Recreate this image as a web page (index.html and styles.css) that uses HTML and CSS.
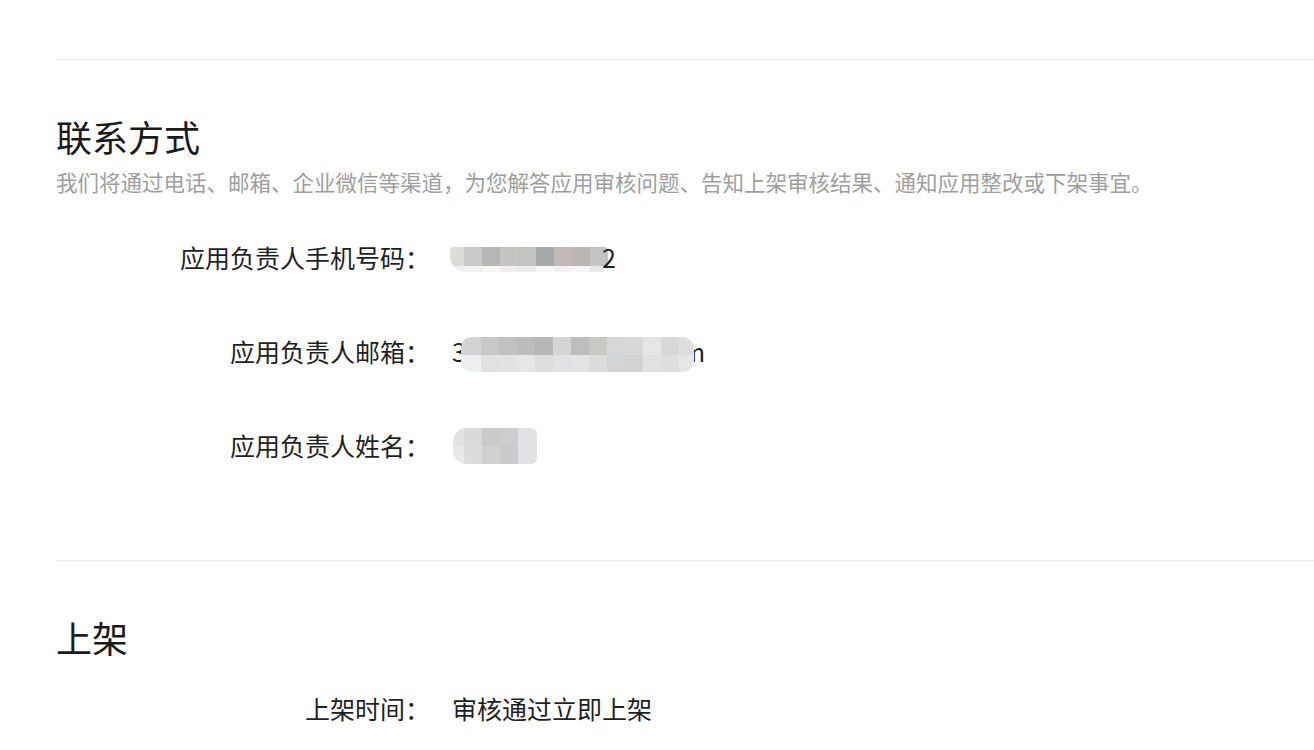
FILE: index.html
```html
<!DOCTYPE html>
<html lang="zh-CN">
<head>
<meta charset="utf-8">
<title>联系方式</title>
<link rel="stylesheet" href="styles.css">
</head>
<body>
<div class="page">
  <section class="section section-contact">
    <h2 class="title">联系方式</h2>
    <p class="desc">我们将通过电话、邮箱、企业微信等渠道，为您解答应用审核问题、告知上架审核结果、通知应用整改或下架事宜。</p>
    <div class="rows">
      <div class="row">
        <div class="label">应用负责人手机号码：</div>
        <div class="value value-phone">
          <div class="mosaic mosaic-phone">
            <i style="background:#dcdcd8"></i><i style="background:#cacaca"></i><i style="background:#b8b7b7"></i><i style="background:#c5c5c3"></i><i style="background:#c3c3c1"></i><i style="background:#a6aaaa"></i><i style="background:#c1b9b7"></i><i style="background:#bab6b2"></i><i style="background:#c3c3c5"></i>
            <i style="background:#eeeeee"></i><i style="background:#f1f1f1"></i><i style="background:#f6f6f5"></i><i style="background:#f0efee"></i><i style="background:#ececec"></i><i style="background:#f6f7f9"></i><i style="background:#f2f2f2"></i><i style="background:#f5f5f4"></i><i style="background:#e8e8e8"></i>
          </div><span class="tail tail-phone">2</span>
        </div>
      </div>
      <div class="row">
        <div class="label">应用负责人邮箱：</div>
        <div class="value value-email">
          <span class="head">3</span><div class="mosaic mosaic-email">
            <i style="background:#d2d3d5"></i><i style="background:#c9c8c6"></i><i style="background:#c0c1c0"></i><i style="background:#bcbcbc"></i><i style="background:#b7b7b7"></i><i style="background:#d5d5d4"></i><i style="background:#bdbdbd"></i><i style="background:#cac8c5"></i><i style="background:#d6d7d9"></i><i style="background:#d8d8d9"></i><i style="background:#e6e6e6"></i><i style="background:#d8d8d8"></i><i style="background:#dddddd"></i>
            <i style="background:#eeefef"></i><i style="background:#e1e1e1"></i><i style="background:#e1e2e4"></i><i style="background:#e6e6e4"></i><i style="background:#dedddd"></i><i style="background:#e2e2e4"></i><i style="background:#e4e4e4"></i><i style="background:#dcdcdc"></i><i style="background:#d5d4d4"></i><i style="background:#d3d3d3"></i><i style="background:#e1e1e1"></i><i style="background:#dedede"></i><i style="background:#e6e6e6"></i>
          </div><span class="tail tail-email">m</span>
        </div>
      </div>
      <div class="row">
        <div class="label">应用负责人姓名：</div>
        <div class="value value-name">
          <div class="mosaic mosaic-name">
            <i style="background:#e2e2e2"></i><i style="background:#dadada"></i><i style="background:#cbcbcb"></i><i style="background:#cdcdcd"></i><i style="background:#e0e2e6"></i>
            <i style="background:#e8e8e8"></i><i style="background:#dcdcdc"></i><i style="background:#d2cfcf"></i><i style="background:#cacaca"></i><i style="background:#e0e2e6"></i>
          </div>
        </div>
      </div>
    </div>
  </section>
  <section class="section section-shelf">
    <h2 class="title">上架</h2>
    <div class="rows rows-shelf">
      <div class="row">
        <div class="label">上架时间：</div>
        <div class="value">审核通过立即上架</div>
      </div>
    </div>
  </section>
</div>
</body>
</html>
```

FILE: styles.css
```css
html, body {
  margin: 0;
  padding: 0;
  background: #ffffff;
}

body {
  font-family: "Noto Sans CJK SC", "Noto Sans", "Liberation Sans", sans-serif;
  color: #222222;
  overflow: hidden;
}

.page {
  padding: 59px 0 0 56px;
}

.section {
  border-top: 1px solid #ebebeb;
}

.section-contact {
  padding-bottom: 95px;
}

.title {
  margin: 51px 0 0 0;
  font-size: 36px;
  line-height: 50px;
  font-weight: 400;
  color: #1a1a1a;
}

.desc {
  margin: 6px 0 0 0;
  font-size: 21.5px;
  line-height: 30px;
  color: #9e9e9e;
  white-space: nowrap;
}

.rows {
  display: flex;
  flex-direction: column;
  gap: 54px;
  margin-top: 40px;
}

.rows-shelf {
  margin-top: 26px;
}

.row {
  display: flex;
  align-items: center;
  height: 40px;
}

.label {
  width: 374px;
  flex: none;
  text-align: right;
  font-size: 25px;
  line-height: 40px;
  color: #1f1f1f;
  white-space: nowrap;
}

.value {
  margin-left: 22px;
  display: flex;
  align-items: center;
  font-size: 25px;
  line-height: 40px;
  color: #1f1f1f;
}

.mosaic {
  display: grid;
  flex: none;
  overflow: hidden;
}

.mosaic i {
  display: block;
}

.value-phone {
  margin-left: 20px;
}

.mosaic-phone {
  grid-template-columns: 14px repeat(8, 18px);
  grid-template-rows: 19px 6px;
  border-radius: 4px 4px 8px 16px;
  margin-top: 5px;
}

.tail-phone {
  margin-left: -6px;
}

.mosaic-email {
  grid-template-columns: 20px repeat(11, 18px) 15px;
  grid-template-rows: 18px 17px;
  border-radius: 10px 12px 12px 10px;
  position: relative;
  z-index: 1;
  margin-top: 6px;
  margin-left: -5px;
}

.tail-email {
  margin-left: -12px;
}

.value-name {
  margin-left: 23px;
}

.mosaic-name {
  grid-template-columns: 11px 18px 18px 18px 19px;
  grid-template-rows: 18px 18px;
  border-radius: 14px 6px 6px 14px;
  margin-top: 2px;
}
```
